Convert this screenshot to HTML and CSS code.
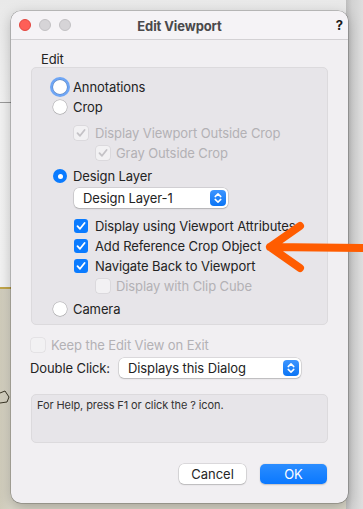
FILE: index.html
```html
<!DOCTYPE html>
<html>
<head>
<meta charset="utf-8">
<link rel="stylesheet" href="styles.css">
</head>
<body>
<div class="desk">
<div class="desk-lower"></div>
<div class="desk-line-grey"></div>
<div class="desk-line-gold"></div>
<div class="desk-side"></div>
<svg class="desk-shape" width="11" height="20" viewBox="0 0 11 20"><polyline points="0,4 5,2 9,8 7,13 0,14" /></svg>
<div class="window">
  <div class="titlebar">
    <div class="lights"><span class="light red"></span><span class="light"></span><span class="light"></span></div>
    <div class="title">Edit Viewport</div>
    <div class="qmark">?</div>
  </div>
  <div class="content">
    <div class="label">Edit</div>
    <div class="group">
      <div class="row"><span class="radio focus"></span><span>Annotations</span></div>
      <div class="row"><span class="radio"></span><span>Crop</span></div>
      <div class="row ind1 gap-top dis"><span class="check dis on"><svg viewBox="0 0 14 14"><path d="M3.5 7.2 L6 9.8 L10.6 4" /></svg></span><span>Display Viewport Outside Crop</span></div>
      <div class="row ind2 dis"><span class="check dis on"><svg viewBox="0 0 14 14"><path d="M3.5 7.2 L6 9.8 L10.6 4" /></svg></span><span>Gray Outside Crop</span></div>
      <div class="row gap-top-s"><span class="radio sel"></span><span>Design Layer</span></div>
      <div class="popup layer"><span>Design Layer-1</span><span class="stepper"><svg viewBox="0 0 16 16"><path d="M5.2 6.6 L8 3.9 L10.8 6.6 M5.2 9.4 L8 12.1 L10.8 9.4"/></svg></span></div>
      <div class="row ind1 gap-top-m"><span class="check blue"><svg viewBox="0 0 14 14"><path d="M3.5 7.2 L6 9.8 L10.6 4" /></svg></span><span>Display using Viewport Attributes</span></div>
      <div class="row ind1"><span class="check blue"><svg viewBox="0 0 14 14"><path d="M3.5 7.2 L6 9.8 L10.6 4" /></svg></span><span>Add Reference Crop Object</span></div>
      <div class="row ind1"><span class="check blue"><svg viewBox="0 0 14 14"><path d="M3.5 7.2 L6 9.8 L10.6 4" /></svg></span><span>Navigate Back to Viewport</span></div>
      <div class="row ind2 dis"><span class="check dis"></span><span>Display with Clip Cube</span></div>
      <div class="row gap-top-s"><span class="radio"></span><span>Camera</span></div>
    </div>
    <div class="row keep dis"><span class="check dis"></span><span>Keep the Edit View on Exit</span></div>
    <div class="dbl">
      <span class="dbl-label">Double Click:</span>
      <div class="popup wide"><span>Displays this Dialog</span><span class="stepper"><svg viewBox="0 0 16 16"><path d="M5.2 6.6 L8 3.9 L10.8 6.6 M5.2 9.4 L8 12.1 L10.8 9.4"/></svg></span></div>
    </div>
    <div class="help">For Help, press F1 or click the ? icon.</div>
    <div class="buttons">
      <button class="btn">Cancel</button>
      <button class="btn ok">OK</button>
    </div>
  </div>
</div>
<svg class="arrow" viewBox="0 0 103 65" width="103" height="65">
  <path d="M10 32 L110 33 M40 11 L10 32 L40 53" />
</svg>
</div>
</body>
</html>
```
FILE: styles.css
```css
* { box-sizing: border-box; }
html, body { margin: 0; padding: 0; background: #f0f0f0; }
body {
  font-family: Inter, "Liberation Sans", sans-serif;
  font-size: 13px;
  letter-spacing: -0.1px;
  color: #232323;
}
.desk {
  width: 363px;
  height: 509px;
  overflow: hidden;
  position: relative;
  padding: 11px 0 0 11px;
  background: linear-gradient(to bottom, #e9e9e9, #f2f2f2 100px, #f3f3f3 288px);
}
.desk-lower {
  position: absolute; left: 0; top: 289px; width: 363px; height: 220px;
  background: linear-gradient(to right, #d0ccbb, #dad7c9 11px);
}
.desk-side {
  position: absolute; left: 346px; top: 0; width: 17px; height: 509px;
  background: linear-gradient(to right, #bdbdbd, #d2d2d2 6px, #dedede 17px);
}
.desk-line-grey {
  position: absolute; left: 0; top: 102px; width: 11px; height: 1px; background: #9a9a9a;
}
.desk-line-gold {
  position: absolute; left: 0; top: 287px; width: 11px; height: 2px; background: #c2a64a;
}
.desk-shape {
  position: absolute; left: 0; top: 389px;
}
.desk-shape polyline { fill: none; stroke: #3a3626; stroke-width: 1; }
.window {
  position: relative;
  z-index: 1;
  width: 337px;
  height: 492px;
  background: #f1eff2;
  border-radius: 10px;
  box-shadow: 0 0 0 0.5px rgba(0,0,0,0.35), 0 4px 14px rgba(0,0,0,0.25);
  overflow: hidden;
  display: flex;
  flex-direction: column;
}
.titlebar {
  height: 29px;
  flex: none;
  background: #f5f3f6;
  border-bottom: 1px solid #d3d1d4;
  display: flex;
  align-items: center;
  position: relative;
}
.lights { display: flex; gap: 8px; padding-left: 8px; }
.light {
  width: 12px; height: 12px; border-radius: 50%;
  background: #d6d4d7; border: 0.5px solid #c2c0c3;
}
.light.red { background: #fe5f57; border-color: #e2463f; }
.title {
  position: absolute; left: 0; right: 0; text-align: center;
  font-weight: 700; font-size: 13px; color: #4a494b;
  top: 7px; line-height: 16px;
}
.qmark {
  margin-left: auto; margin-right: 5px;
  font-weight: 700; font-size: 13px; color: #1a1a1a;
}
.content {
  padding: 11px 20px 0 20px;
  display: flex;
  flex-direction: column;
}
.label { line-height: 16px; padding-left: 10px; margin-bottom: 0px; }
.group {
  background: #e7e5e9;
  border: 1px solid #dcdadd;
  border-radius: 5px;
  height: 258px;
  padding: 9px 0 0 21px;
}
.row {
  height: 20px;
  display: flex;
  align-items: center;
  gap: 6px;
  white-space: nowrap;
}
.row.dis { color: #b3b1b5; }
.ind1 { padding-left: 21px; gap: 7px; }
.ind2 { padding-left: 43px; gap: 6px; }
.gap-top { margin-top: 6px; }
.gap-top-s { margin-top: 3px; }
.gap-top-m { margin-top: 8px; }
.radio {
  width: 14px; height: 14px; border-radius: 50%;
  background: #fff;
  box-shadow: 0 0 0 0.5px rgba(0,0,0,0.25), 0 0.5px 1px rgba(0,0,0,0.15);
  flex: none;
  position: relative;
}
.radio.focus { box-shadow: 0 0 0 0.5px rgba(0,0,0,0.25), 0 0 0 3px #6fa6f5; }
.radio.sel { background: #0a7bff; box-shadow: none; }
.radio.sel::after {
  content: ""; position: absolute; left: 4.5px; top: 4.5px;
  width: 5px; height: 5px; border-radius: 50%; background: #fff;
}
.check {
  width: 14px; height: 14px; border-radius: 3px;
  background: #fff;
  box-shadow: 0 0 0 0.5px rgba(0,0,0,0.25), 0 0.5px 1px rgba(0,0,0,0.12);
  flex: none;
  display: flex; align-items: center; justify-content: center;
}
.check svg { width: 14px; height: 14px; fill: none; stroke-width: 1.8; stroke-linecap: round; stroke-linejoin: round; }
.check.blue { background: #0a7bff; box-shadow: none; }
.check.blue svg { stroke: #fff; }
.check.dis { background: #f2f1f3; box-shadow: 0 0 0 0.5px rgba(0,0,0,0.1); }
.check.dis svg { stroke: #c4c2c6; }
.popup {
  height: 20px;
  background: #fff;
  border-radius: 5px;
  box-shadow: 0 0 0 0.5px rgba(0,0,0,0.18), 0 1px 1.5px rgba(0,0,0,0.15);
  display: flex; align-items: center;
  padding: 0 2px 0 9px;
  justify-content: space-between;
  white-space: nowrap;
}
.popup.layer { width: 154px; margin: 2px 0 0 21px; }
.stepper {
  width: 16px; height: 16px; border-radius: 4px;
  background: linear-gradient(#3d95ff, #0a74f5);
  display: flex;
}
.stepper svg { width: 16px; height: 16px; fill: none; stroke: #fff; stroke-width: 1.5; stroke-linecap: round; stroke-linejoin: round; }
.keep { margin-top: 10px; gap: 6px; }
.dbl { display: flex; align-items: center; margin-top: 3px; height: 20px; }
.dbl-label { width: 89px; margin-left: -1px; }
.popup.wide { width: 182px; }
.help {
  margin-top: 16px;
  height: 49px;
  background: #e7e5e9;
  border: 1px solid #dcdadd;
  border-radius: 5px;
  font-size: 11px;
  padding: 4px 5px;
  line-height: 13px;
  color: #333;
}
.buttons {
  margin-top: 21px;
  display: flex; justify-content: flex-end; gap: 14px;
  padding-right: 1px;
}
.btn {
  width: 67px; height: 20px;
  border: none; border-radius: 5px;
  font-family: Inter, "Liberation Sans", sans-serif;
  font-size: 13px; color: #262626;
  background: #fff;
  box-shadow: 0 0 0 0.5px rgba(0,0,0,0.18), 0 1px 1.5px rgba(0,0,0,0.15);
  padding: 0;
}
.btn.ok {
  background: linear-gradient(#2b8dff, #0a78ff);
  color: #fff;
  box-shadow: 0 0.5px 1.5px rgba(0,0,0,0.2);
}
.arrow {
  position: absolute; left: 260px; top: 215px;
  z-index: 2;
  overflow: visible;
}
.arrow path { fill: none; stroke: #ff5c00; stroke-width: 8; stroke-linecap: round; stroke-linejoin: round; }
```
